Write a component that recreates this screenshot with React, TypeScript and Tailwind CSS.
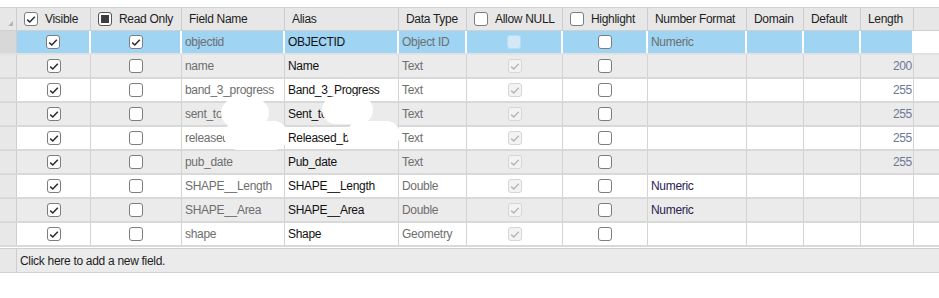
import React from 'react';

type Row = {
  field: string;
  alias: string;
  type: string;
  readOnly?: boolean;
  format?: string;
  length?: string;
  selected?: boolean;
};

const rows: Row[] = [
  { field: 'objectid', alias: 'OBJECTID', type: 'Object ID', readOnly: true, format: 'Numeric', selected: true },
  { field: 'name', alias: 'Name', type: 'Text', length: '200' },
  { field: 'band_3_progress', alias: 'Band_3_Progress', type: 'Text', length: '255' },
  { field: 'sent_to', alias: 'Sent_to', type: 'Text', length: '255' },
  { field: 'released', alias: 'Released_b', type: 'Text', length: '255' },
  { field: 'pub_date', alias: 'Pub_date', type: 'Text', length: '255' },
  { field: 'SHAPE__Length', alias: 'SHAPE__Length', type: 'Double', format: 'Numeric' },
  { field: 'SHAPE__Area', alias: 'SHAPE__Area', type: 'Double', format: 'Numeric' },
  { field: 'shape', alias: 'Shape', type: 'Geometry' },
];

const grid = 'grid grid-cols-[17px_74px_91px_103px_114px_68px_96px_85px_99px_57px_57px_53px_1fr]';

const Check = ({ color }: { color: string }) => (
  <svg width="10" height="9" viewBox="0 0 10 9" className="block">
    <path d="M1.2 4.6 L3.8 7 L8.8 1.8" fill="none" stroke={color} strokeWidth="1.6" />
  </svg>
);

const Box = ({ kind, checked }: { kind: 'normal' | 'disabled' | 'selDisabled' | 'mixed'; checked?: boolean }) => {
  if (kind === 'disabled') {
    return (
      <div className="w-[14px] h-[14px] rounded-[3px] border border-[#d6d6d6] bg-[#f3f3f3] flex items-center justify-center">
        {checked && <Check color="#b8b8b8" />}
      </div>
    );
  }
  if (kind === 'selDisabled') {
    return <div className="w-[14px] h-[14px] rounded-[3px] border border-[#bfdcef] bg-[#d3e9f7]" />;
  }
  if (kind === 'mixed') {
    return (
      <div className="w-[14px] h-[14px] rounded-[3px] border border-[#555] bg-white flex items-center justify-center">
        <div className="w-[8px] h-[8px] bg-[#3c3c3c]" />
      </div>
    );
  }
  return (
    <div className="w-[14px] h-[14px] rounded-[3px] border border-[#7d7d7d] bg-white flex items-center justify-center">
      {checked && <Check color="#2e2e2e" />}
    </div>
  );
};

const HeadCell = ({ children, box }: { children: React.ReactNode; box?: 'checked' | 'mixed' | 'empty' }) => (
  <div className="h-[22px] border-r border-[#cdcdcd] flex items-center pl-[7px] gap-[7px] text-[#1e1e1e] whitespace-nowrap overflow-hidden">
    {box === 'checked' && <Box kind="normal" checked />}
    {box === 'mixed' && <Box kind="mixed" />}
    {box === 'empty' && <Box kind="normal" />}
    <span>{children}</span>
  </div>
);

export default function App() {
  return (
    <div
      className="w-[939px] h-[298px] bg-white pt-[7px] text-[12px] tracking-[-0.3px] relative overflow-hidden"
      style={{ fontFamily: '"Liberation Sans", Arial, sans-serif' }}
    >
      {/* header */}
      <div className={`${grid} bg-[#e7e7e7] border-y border-[#d0d0d0]`}>
        <div className="h-[22px] border-r border-[#cdcdcd] flex items-end justify-end pr-[3px] pb-[4px]">
          <svg width="5" height="5" viewBox="0 0 5 5">
            <path d="M5 0 L5 5 L0 5 Z" fill="#b5b5b5" />
          </svg>
        </div>
        <HeadCell box="checked">Visible</HeadCell>
        <HeadCell box="mixed">Read Only</HeadCell>
        <HeadCell>Field Name</HeadCell>
        <HeadCell>Alias</HeadCell>
        <HeadCell>Data Type</HeadCell>
        <HeadCell box="empty">Allow NULL</HeadCell>
        <HeadCell box="empty">Highlight</HeadCell>
        <HeadCell>Number Format</HeadCell>
        <HeadCell>Domain</HeadCell>
        <HeadCell>Default</HeadCell>
        <HeadCell>Length</HeadCell>
        <div className="h-[22px]" />
      </div>

      {/* rows */}
      {rows.map((r, i) => {
        const sel = !!r.selected;
        const bg = sel ? 'bg-[#9fd4f3]' : i % 2 === 1 ? 'bg-[#ebebeb]' : 'bg-white';
        const cell = `h-[22px] flex items-center overflow-hidden whitespace-nowrap ${bg} ${
          sel ? 'border-r-2 border-white' : 'border-r border-[#d3d3d3]'
        }`;
        return (
          <div key={r.field} className={`${grid} border-b-2 ${sel ? 'border-[#e2e2e2]' : 'border-[#d9d9d9]'}`}>
            <div className={`h-[22px] border-r border-[#cdcdcd] ${sel ? 'bg-[#d8d8d8]' : 'bg-[#e8e8e8]'}`} />
            <div className={`${cell} justify-center`}>
              <Box kind="normal" checked />
            </div>
            <div className={`${cell} justify-center`}>
              <Box kind="normal" checked={r.readOnly} />
            </div>
            <div className={`${cell} pl-[3px] text-[#6e6e6e]`}>{r.field}</div>
            <div className={`${cell} pl-[3px] text-[#111]`}>{r.alias}</div>
            <div className={`${cell} pl-[3px] text-[#6e6e6e]`}>{r.type}</div>
            <div className={`${cell} justify-center`}>
              {sel ? <Box kind="selDisabled" /> : <Box kind="disabled" checked />}
            </div>
            <div className={`${cell} justify-center`}>
              <Box kind="normal" />
            </div>
            <div className={`${cell} pl-[3px] ${sel ? 'text-[#6e6e6e]' : 'text-[#2b2150]'}`}>{r.format}</div>
            <div className={cell} />
            <div className={cell} />
            <div className={`${cell} justify-end pr-[1px] text-[#6d7896]`}>{r.length}</div>
            <div className={`h-[22px] ${sel ? 'bg-white' : i % 2 === 1 ? 'bg-[#ebebeb]' : 'bg-white'}`} />
          </div>
        );
      })}

      {/* add new field */}
      <div className="flex h-[25px] mt-[1px] bg-[#ebebeb] border-y border-[#d0d0d0]">
        <div className="w-[17px] border-r border-[#cdcdcd] bg-[#e8e8e8]" />
        <div className="flex items-center pl-[3px] text-[#1e1e1e]">Click here to add a new field.</div>
      </div>

      {/* redaction smudges */}
      <div className="absolute left-[221px] top-[99px] w-[48px] h-[28px] rounded-full bg-white" />
      <div className="absolute left-[224px] top-[121px] w-[64px] h-[29px] rounded-full bg-white" />
      <div className="absolute left-[322px] top-[96px] w-[51px] h-[28px] rounded-full bg-white" />
      <div className="absolute left-[347px] top-[121px] w-[53px] h-[27px] rounded-full bg-white" />
    </div>
  );
}
